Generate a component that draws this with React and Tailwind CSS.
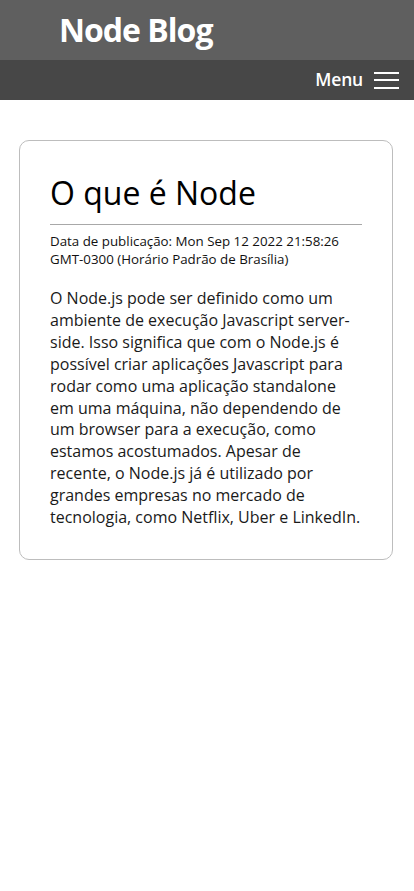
export default function App() {
  return (
    <div className="min-h-[891px] bg-white" style={{ fontFamily: '"Open Sans", sans-serif' }}>
      <header>
        <div className="h-[60px] bg-[#5f5f5f] flex items-center pl-[59px]">
          <h1 className="text-[32px] font-bold text-white leading-none tracking-[-1px] pb-[1px]">Node Blog</h1>
        </div>
        <nav className="h-[40px] bg-[#474747] flex items-center justify-end pr-[15px]">
          <span className="text-[17.5px] font-semibold text-white leading-none mr-[11px] tracking-[-0.2px]">Menu</span>
          <div className="flex flex-col gap-[5.5px] w-[25px]">
            <span className="block h-[2px] bg-white"></span>
            <span className="block h-[2px] bg-white"></span>
            <span className="block h-[2px] bg-white"></span>
          </div>
        </nav>
      </header>
      <main className="pt-[40px] pl-[19px] pr-[21px]">
        <article className="border border-[#bdbdbd] rounded-[10px] pt-[30px] pb-[30px] pl-[30px] pr-[30px]">
          <h2 className="text-[32px] text-black leading-[44px] pb-[9px] border-b border-[#a8a8a8]">O que é Node</h2>
          <p className="text-[13.33px] text-[#111] leading-[17.5px] mt-[8px]">
            Data de publicação: Mon Sep 12 2022 21:58:26 GMT-0300 (Horário Padrão de Brasília)
          </p>
          <p className="text-[16px] text-[#1a1a1a] leading-[21.9px] mt-[20px]">
            O Node.js pode ser definido como um ambiente de execução Javascript server-side. Isso significa que com o Node.js é possível criar aplicações Javascript para rodar como uma aplicação standalone em uma máquina, não dependendo de um browser para a execução, como estamos acostumados. Apesar de recente, o Node.js já é utilizado por grandes empresas no mercado de tecnologia, como Netflix, Uber e LinkedIn.
          </p>
        </article>
      </main>
    </div>
  );
}
